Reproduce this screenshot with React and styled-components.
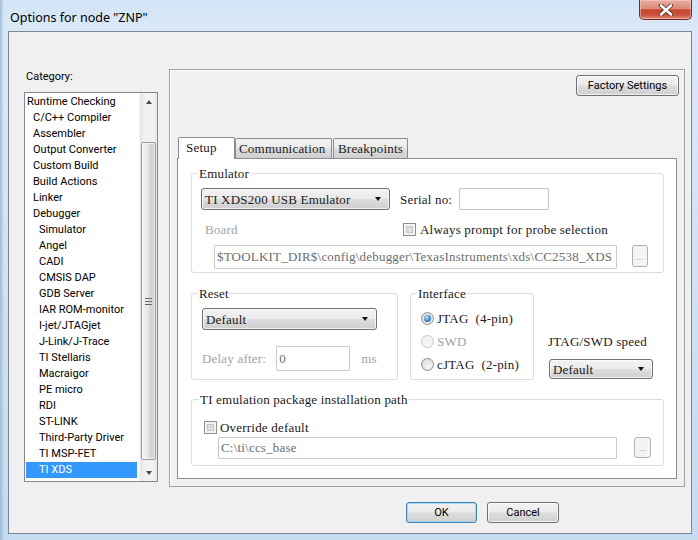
import React from 'react'
import styled, { createGlobalStyle } from 'styled-components'

const sans = `Roboto, "Liberation Sans", Arial, sans-serif`
const serif = `"Liberation Serif", "Times New Roman", serif`
const ink = '#202020'

const GlobalStyle = createGlobalStyle`
  html, body {
    margin: 0;
    padding: 0;
  }
  body {
    width: 698px;
    height: 540px;
    overflow: hidden;
    background: #cadff4;
  }
`

const categories = [
  ['Runtime Checking', 0],
  ['C/C++ Compiler', 1],
  ['Assembler', 1],
  ['Output Converter', 1],
  ['Custom Build', 1],
  ['Build Actions', 1],
  ['Linker', 1],
  ['Debugger', 1],
  ['Simulator', 2],
  ['Angel', 2],
  ['CADI', 2],
  ['CMSIS DAP', 2],
  ['GDB Server', 2],
  ['IAR ROM-monitor', 2],
  ['I-jet/JTAGjet', 2],
  ['J-Link/J-Trace', 2],
  ['TI Stellaris', 2],
  ['Macraigor', 2],
  ['PE micro', 2],
  ['RDI', 2],
  ['ST-LINK', 2],
  ['Third-Party Driver', 2],
  ['TI MSP-FET', 2],
  ['TI XDS', 2],
]

const buttonFace = `linear-gradient(#f2f2f2, #ebebeb 48%, #dddddd 52%, #cfcfcf)`

// serif text of the dialog pages, hinted size with a little tracking
const pageFont = `
  font-family: ${serif};
  font-size: 13px;
  line-height: 15px;
  letter-spacing: 0.2px;
`

const Window = styled.div`
  width: 698px;
  height: 540px;
  display: flex;
  flex-direction: column;
  background:
    linear-gradient(to right, rgba(120, 155, 195, 0.55), rgba(120, 155, 195, 0) 4px),
    linear-gradient(#d2e4f7, #dbe9f7 31px, #cfe0f2 60%, #c6daf0);
  font-family: ${sans};
`

const TitleBar = styled.div`
  height: 31px;
  flex: none;
  display: flex;
  justify-content: space-between;
  align-items: flex-start;
`

const TitleText = styled.div`
  padding: 10px 0 0 10px;
  font: 12.5px/16px "Noto Sans", "Open Sans", sans-serif;
  color: #000;
`

const CloseButton = styled.div`
  box-sizing: border-box;
  width: 53px;
  height: 20px;
  margin-right: 6px;
  display: flex;
  align-items: center;
  justify-content: center;
  border: 1px solid #6b2d26;
  border-top: none;
  border-radius: 0 0 5px 5px;
  background: linear-gradient(#e9aea2, #dd8a77 45%, #c8462e 52%, #c9503a 78%, #e48f7a);
  box-shadow: inset 0 0 0 1px rgba(255, 220, 210, 0.45);
`

const Client = styled.div`
  flex: 1;
  margin: 0 6px 6px 8px;
  border: 1px solid #7b8894;
  background: #f0f0f0;
  display: flex;
  flex-direction: column;
`

const Body = styled.div`
  display: flex;
  align-items: flex-start;
  padding-top: 37px;
`

const LeftColumn = styled.div`
  width: 134px;
  margin-left: 15px;
  padding-top: 1px;
`

const CategoryLabel = styled.div`
  font-size: 11px;
  line-height: 14px;
  margin: 0 0 8px 2px;
  color: #000;
`

const ListBox = styled.div`
  box-sizing: border-box;
  height: 390px;
  border: 1px solid #828790;
  background: #fff;
  display: flex;
`

const Rows = styled.div`
  flex: 1;
  padding: 1px 2px 0 1px;
`

const Row = styled.div`
  height: 16px;
  line-height: 16px;
  font-size: 11px;
  white-space: nowrap;
  padding-left: ${p => 1 + p.$level * 6}px;
  color: ${p => (p.$selected ? '#fff' : '#000')};
  background: ${p => (p.$selected ? '#3399ff' : 'transparent')};
`

const ScrollBar = styled.div`
  width: 17px;
  display: flex;
  flex-direction: column;
  background: linear-gradient(to right, #e6e6e6, #f2f2f2 30%, #f2f2f2 70%, #e9e9e9);
  border-left: 1px solid #f7f7f7;
`

const ArrowCell = styled.div`
  height: 17px;
  flex: none;
  display: flex;
  align-items: center;
  justify-content: center;
`

const ArrowUp = styled.span`
  width: 0;
  height: 0;
  border-left: 3.5px solid transparent;
  border-right: 3.5px solid transparent;
  border-bottom: 4px solid #4a4a4a;
`

const ArrowDown = styled.span`
  width: 0;
  height: 0;
  border-left: 3.5px solid transparent;
  border-right: 3.5px solid transparent;
  border-top: 4px solid ${p => p.$color || '#4a4a4a'};
`

const Track = styled.div`
  flex: 1;
  padding: 32px 1px 0;
`

const Thumb = styled.div`
  box-sizing: border-box;
  height: 318px;
  border: 1px solid #9b9b9b;
  border-radius: 2px;
  background: linear-gradient(to right, #f4f4f4, #e8e8e8 45%, #d9d9d9 55%, #d0d0d0);
  box-shadow: inset 0 0 0 1px rgba(255, 255, 255, 0.6);
  display: flex;
  align-items: center;
  justify-content: center;
`

const Gripper = styled.span`
  width: 7px;
  height: 7px;
  background: repeating-linear-gradient(#6a6a6a 0 1px, transparent 1px 3px);
`

const Panel = styled.div`
  box-sizing: border-box;
  width: 516px;
  height: 418px;
  margin-left: 11px;
  border: 1px solid #a0a0a0;
  box-shadow: inset 1px 1px 0 #fff;
  display: flex;
  flex-direction: column;
`

const PushButton = styled.button`
  box-sizing: border-box;
  width: ${p => p.$width}px;
  height: 21px;
  padding: 0;
  border: 1px solid ${p => (p.$default ? '#3c7fb1' : '#707070')};
  border-radius: 3px;
  background: ${buttonFace};
  box-shadow: inset 0 0 0 1px ${p => (p.$default ? '#a3d7f3' : 'rgba(255, 255, 255, 0.7)')};
  font: 11px ${sans};
  color: #000;
`

const FactoryButton = styled(PushButton)`
  align-self: flex-end;
  margin: 5px 5px 0 0;
`

const TabControl = styled.div`
  flex: 1;
  margin: 41px 7px 7px 7px;
  display: flex;
  flex-direction: column;
`

const TabStrip = styled.div`
  display: flex;
  align-items: flex-end;
  padding-left: 1px;
`

const Tab = styled.div`
  box-sizing: border-box;
  width: ${p => p.$width}px;
  height: ${p => (p.$active ? 22 : 20)}px;
  padding: ${p => (p.$active ? 2 : 2)}px 0 0 ${p => p.$pad}px;
  margin-right: ${p => p.$gap || 0}px;
  margin-bottom: ${p => (p.$active ? -1 : 0)}px;
  border: 1px solid #898c95;
  border-bottom: none;
  border-radius: 2px 2px 0 0;
  background: ${p => (p.$active ? '#fff' : buttonFace)};
  ${pageFont}
  color: ${ink};
  position: relative;
  z-index: ${p => (p.$active ? 1 : 0)};
`

const TabPage = styled.div`
  flex: 1;
  border: 1px solid #898c95;
  background: #fff;
  padding: 7px 12px 0 13px;
  ${pageFont}
  color: ${ink};
`

const GroupBox = styled.fieldset`
  box-sizing: border-box;
  margin: ${p => p.$top || 0}px 0 0 ${p => p.$left || 0}px;
  width: ${p => (p.$width ? `${p.$width}px` : 'auto')};
  min-width: 0;
  padding: ${p => p.$pad};
  border: 1px solid #d5dfe5;
  border-radius: 3px;
`

const Legend = styled.legend`
  margin-left: ${p => p.$indent}px;
  padding: 0 1px;
  ${pageFont}
  color: ${ink};
`

const EmulatorGrid = styled.div`
  display: grid;
  grid-template-columns: 199px 1fr;
  row-gap: 12px;
`

const Inline = styled.div`
  display: flex;
  align-items: ${p => p.$align || 'center'};
  margin-top: ${p => p.$top || 0}px;
  padding-left: ${p => p.$left || 0}px;
  align-self: ${p => p.$self || 'auto'};
`

const ComboBox = styled.div`
  box-sizing: border-box;
  width: ${p => p.$width}px;
  height: ${p => p.$height || 22}px;
  padding: 0 8px 0 3px;
  border: 1px solid #707070;
  border-radius: 3px;
  background: ${buttonFace};
  box-shadow: inset 0 0 0 1px rgba(255, 255, 255, 0.7);
  display: flex;
  align-items: center;
  justify-content: space-between;
  ${pageFont}
  color: ${ink};
`

const TextLabel = styled.span`
  white-space: nowrap;
  color: ${p => (p.$disabled ? '#a3a3a3' : ink)};
  margin-left: ${p => p.$left || 0}px;
`

const TextBox = styled.input`
  box-sizing: border-box;
  width: ${p => p.$width}px;
  height: ${p => p.$height || 22}px;
  margin: 0 0 0 ${p => p.$left || 0}px;
  padding: 0 2px;
  border: 1px solid ${p => (p.disabled ? '#c9c9c9' : '#c3c6cb')};
  border-radius: 1px;
  background: #fff;
  ${pageFont}
  color: #6d6d6d;
  outline: none;
  &:disabled {
    color: #6d6d6d;
    -webkit-text-fill-color: #6d6d6d;
  }
`

const BrowseButton = styled.div`
  box-sizing: border-box;
  width: ${p => p.$width || 16}px;
  height: ${p => p.$height || 22}px;
  margin-left: ${p => p.$left}px;
  border: 1px solid #adb2b5;
  border-radius: 3px;
  background: #f4f4f4;
  display: flex;
  align-items: flex-end;
  justify-content: center;
  padding-bottom: 4px;
  font: 9px/9px ${sans};
  color: #8a8a8a;
`

const CheckLine = styled.label`
  display: flex;
  align-items: center;
  height: 15px;
  padding-left: ${p => p.$left || 0}px;
  white-space: nowrap;
`

const CheckBox = styled.span`
  box-sizing: border-box;
  width: 13px;
  height: 13px;
  flex: none;
  margin-right: ${p => p.$gap}px;
  border: 1px solid #8e8f8f;
  background: linear-gradient(135deg, #cbcbcb, #f3f3f3);
  box-shadow: inset 0 0 0 2px #f4f4f4, inset 0 0 0 3px #c6c6c6;
`

const ResetRow = styled.div`
  display: flex;
  align-items: stretch;
  margin-top: 13px;
`

const RadioLine = styled.div`
  height: 23px;
  display: flex;
  align-items: center;
  color: ${p => (p.$disabled ? '#a3a3a3' : ink)};
  white-space: nowrap;
`

const Radio = styled.span`
  box-sizing: border-box;
  width: 13px;
  height: 13px;
  flex: none;
  margin-right: 3px;
  border-radius: 50%;
  border: 1px solid ${p => (p.$disabled ? '#c9c9c9' : '#8e8f8f')};
  background: ${p => (p.$disabled ? '#f4f4f4' : 'radial-gradient(circle at 60% 65%, #f6f6f6, #d2d2d2)')};
  display: flex;
  align-items: center;
  justify-content: center;
  &::after {
    content: '';
    display: ${p => (p.$checked ? 'block' : 'none')};
    width: 7px;
    height: 7px;
    border-radius: 50%;
    background: radial-gradient(circle at 40% 35%, #b8e6fc, #3b86c8 55%, #1c4f8f);
  }
`

const SpeedColumn = styled.div`
  display: flex;
  flex-direction: column;
  justify-content: flex-end;
  margin-left: 15px;
  padding-bottom: 1px;
`

const SpeedLabel = styled.div`
  margin: 0 0 10px -1px;
  white-space: nowrap;
`

const Footer = styled.div`
  display: flex;
  gap: 10px;
  padding: 15px 0 0 397px;
`

const CloseGlyph = () => (
  <svg width="16" height="12" viewBox="0 0 16 12">
    <path d="M3 1.5 L13 10.5 M13 1.5 L3 10.5" stroke="#5a2a24" strokeWidth="4.2" strokeLinecap="round" />
    <path d="M3 1.5 L13 10.5 M13 1.5 L3 10.5" stroke="#fff" strokeWidth="2.6" strokeLinecap="round" />
  </svg>
)

const CategoryList = () => (
  <ListBox>
    <Rows>
      {categories.map(([name, level]) => (
        <Row key={name} $level={level} $selected={name === 'TI XDS'}>
          {name}
        </Row>
      ))}
    </Rows>
    <ScrollBar>
      <ArrowCell>
        <ArrowUp />
      </ArrowCell>
      <Track>
        <Thumb>
          <Gripper />
        </Thumb>
      </Track>
      <ArrowCell>
        <ArrowDown />
      </ArrowCell>
    </ScrollBar>
  </ListBox>
)

const SetupPage = () => (
  <TabPage>
    <GroupBox $pad="7px 0 3px 9px">
      <Legend $indent={-3}>Emulator</Legend>
      <EmulatorGrid>
        <ComboBox $width={189}>
          TI XDS200 USB Emulator
          <ArrowDown $color="#111" />
        </ComboBox>
        <Inline>
          <TextLabel>Serial no:</TextLabel>
          <TextBox $width={90} $left={7} readOnly value="" />
        </Inline>
        <Inline $left={4} $self="end">
          <TextLabel $disabled>Board</TextLabel>
        </Inline>
        <CheckLine $left={3}>
          <CheckBox $gap={4} />
          Always prompt for probe selection
        </CheckLine>
      </EmulatorGrid>
      <Inline $align="flex-start" $top={8} $left={13}>
        <TextBox
          $width={403}
          $height={24}
          disabled
          value="$TOOLKIT_DIR$\config\debugger\TexasInstruments\xds\CC2538_XDS"
        />
        <BrowseButton $left={15}>...</BrowseButton>
      </Inline>
    </GroupBox>

    <ResetRow>
      <GroupBox $width={207} $pad="7px 0 8px 10px">
        <Legend $indent={-4}>Reset</Legend>
        <ComboBox $width={175}>
          Default
          <ArrowDown $color="#111" />
        </ComboBox>
        <Inline $top={16}>
          <TextLabel $disabled>Delay after:</TextLabel>
          <TextBox $width={74} $height={25} $left={10} disabled value="0" />
          <TextLabel $disabled $left={11}>ms</TextLabel>
        </Inline>
      </GroupBox>

      <GroupBox $width={124} $left={12} $pad="6px 0 2px 10px">
        <Legend $indent={-4}>Interface</Legend>
        <RadioLine>
          <Radio $checked />
          JTAG&nbsp; (4-pin)
        </RadioLine>
        <RadioLine $disabled>
          <Radio $disabled />
          SWD
        </RadioLine>
        <RadioLine>
          <Radio />
          cJTAG&nbsp; (2-pin)
        </RadioLine>
      </GroupBox>

      <SpeedColumn>
        <SpeedLabel>JTAG/SWD speed</SpeedLabel>
        <ComboBox $width={104} $height={20}>
          Default
          <ArrowDown $color="#111" />
        </ComboBox>
      </SpeedColumn>
    </ResetRow>

    <GroupBox $top={12} $pad="13px 0 6px 12px">
      <Legend $indent={-5}>TI emulation package installation path</Legend>
      <CheckLine>
        <CheckBox $gap={3} />
        Override default
      </CheckLine>
      <Inline $align="flex-start" $top={2} $left={14}>
        <TextBox $width={399} disabled value="C:\ti\ccs_base" />
        <BrowseButton $left={17} $width={17} $height={21}>...</BrowseButton>
      </Inline>
    </GroupBox>
  </TabPage>
)

const App = () => (
  <>
    <GlobalStyle />
    <Window>
      <TitleBar>
        <TitleText>Options for node "ZNP"</TitleText>
        <CloseButton>
          <CloseGlyph />
        </CloseButton>
      </TitleBar>
      <Client>
        <Body>
          <LeftColumn>
            <CategoryLabel>Category:</CategoryLabel>
            <CategoryList />
          </LeftColumn>
          <Panel>
            <FactoryButton $width={103}>Factory Settings</FactoryButton>
            <TabControl>
              <TabStrip>
                <Tab $active $width={57} $pad={7}>Setup</Tab>
                <Tab $width={97} $pad={3} $gap={1}>Communication</Tab>
                <Tab $width={75} $pad={4}>Breakpoints</Tab>
              </TabStrip>
              <SetupPage />
            </TabControl>
          </Panel>
        </Body>
        <Footer>
          <PushButton $width={71} $default>OK</PushButton>
          <PushButton $width={72}>Cancel</PushButton>
        </Footer>
      </Client>
    </Window>
  </>
)

export default App
